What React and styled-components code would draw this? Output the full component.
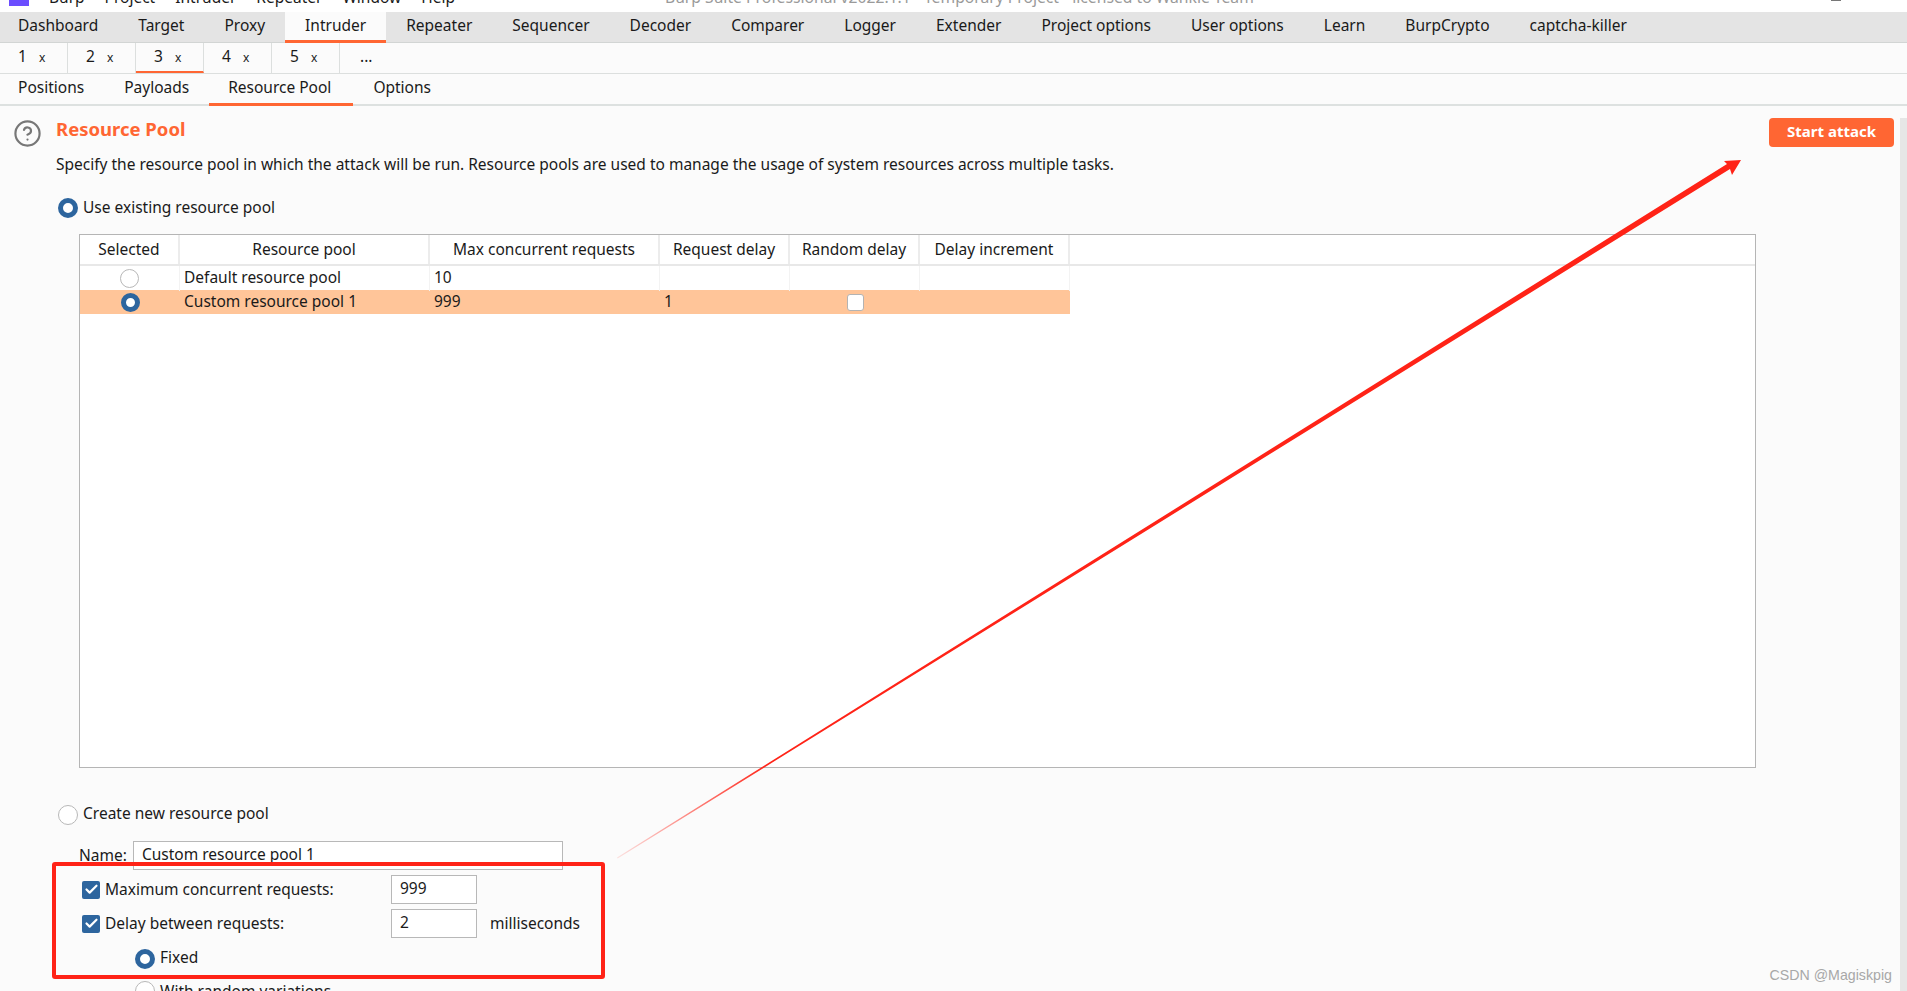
import styled, { createGlobalStyle } from "styled-components";
import { Check, CircleHelp } from "lucide-react";

const GlobalStyle = createGlobalStyle`
  html, body {
    margin: 0;
    padding: 0;
    background: #fbfbfb;
    overflow: hidden;
  }
  * {
    box-sizing: border-box;
  }
`;

const orange = "#ff6633";
const blue = "#2d659e";

const Page = styled.div`
  position: relative;
  width: 1907px;
  height: 991px;
  overflow: hidden;
  background: #fbfbfb;
  color: #1a1a1a;
  font-family: "Noto Sans", "Liberation Sans", sans-serif;
  font-size: 15.5px;
  display: flex;
  flex-direction: column;
`;

const MenuBar = styled.div`
  position: relative;
  flex: none;
  height: 12px;
  background: #fff;
  overflow: hidden;
`;

const MenuInner = styled.div`
  position: absolute;
  left: 9px;
  right: 0;
  bottom: 5px;
  height: 20px;
  line-height: 20px;
  display: flex;
  align-items: center;
  white-space: nowrap;
`;

const Logo = styled.div`
  position: absolute;
  left: 9px;
  top: -14px;
  width: 20px;
  height: 20px;
  background: #6b4dff;
`;

const MenuItem = styled.span`
  margin-left: ${(p) => p.$left}px;
`;

const WindowTitle = styled.span`
  margin-left: 210px;
  color: #9a9a9a;
  font-size: 15.7px;
`;

const WindowButton = styled.div`
  position: absolute;
  top: 0;
  left: ${(p) => p.$left}px;
  width: 10px;
  height: 1px;
  background: #777;
`;

const MainTabs = styled.div`
  flex: none;
  height: 31px;
  background: #e4e4e4;
  border-bottom: 1px solid #d2d5d4;
  display: flex;
`;

const MainTab = styled.div`
  height: 31px;
  padding: 0 20px;
  line-height: 27px;
  background: ${(p) => (p.$active ? "#fbfbfb" : "transparent")};
  border-bottom: ${(p) => (p.$active ? `3px solid ${orange}` : "none")};
  white-space: nowrap;
  &:first-child {
    padding-left: 18px;
  }
`;

const NumberTabs = styled.div`
  flex: none;
  height: 31px;
  border-bottom: 1px solid #dcdfde;
  display: flex;
`;

const NumberTab = styled.div`
  width: ${(p) => p.$width || 68}px;
  height: 30px;
  border-right: ${(p) => (p.$last ? "none" : "1px solid #dcdfde")};
  border-bottom: ${(p) => (p.$active ? `2px solid ${orange}` : "none")};
  display: flex;
  align-items: center;
  padding-left: ${(p) => (p.$last ? 20 : 18)}px;
  gap: 12px;
  line-height: 26px;
  padding-bottom: ${(p) => (p.$active ? 2 : 4)}px;
`;

const CloseMark = styled.span`
  font-size: 12px;
  padding-top: 3px;
`;

const SubTabs = styled.div`
  flex: none;
  height: 32px;
  border-bottom: 2px solid #dde1e0;
  display: flex;
`;

const SubTab = styled.div`
  height: 32px;
  padding: ${(p) => (p.$active ? "0 22px 0 19px" : "0 20px")};
  line-height: 27px;
  border-bottom: ${(p) => (p.$active ? `3px solid ${orange}` : "none")};
  white-space: nowrap;
  &:first-child {
    padding-left: 18px;
  }
`;

const Main = styled.div`
  flex: 1;
  min-height: 0;
  display: flex;
  padding-top: 12px;
`;

const HelpColumn = styled.div`
  flex: none;
  width: 56px;
  padding: 1px 0 0 13px;
  color: #777;
`;

const Content = styled.div`
  flex: 1;
  min-width: 0;
`;

const Title = styled.h2`
  margin: 0;
  height: 22px;
  line-height: 22px;
  font-size: 18.5px;
  font-weight: 700;
  color: ${orange};
`;

const Description = styled.p`
  margin: 13px 0 0;
  height: 22px;
  line-height: 22px;
`;

const OptionRow = styled.div`
  display: flex;
  align-items: center;
  gap: 5px;
  height: 24px;
  margin-top: ${(p) => p.$top || 0}px;
  margin-left: ${(p) => p.$left || 0}px;
`;

const Radio = styled.span`
  flex: none;
  display: inline-block;
  width: ${(p) => p.$size || 20}px;
  height: ${(p) => p.$size || 20}px;
  margin-top: ${(p) => p.$drop || 0}px;
  border-radius: 50%;
  background: #fff;
  border: ${(p) => (p.$on ? `5.5px solid ${blue}` : "1.5px solid #b8b8b8")};
`;

const Table = styled.div`
  width: 1677px;
  height: 534px;
  margin: 15px 0 0 23px;
  background: #fff;
  border: 1px solid #b5b5b5;
`;

const columns = "100px 250px 230px 130px 130px 150px";

const HeaderRow = styled.div`
  display: grid;
  grid-template-columns: ${columns} 1fr;
  height: 31px;
  border-bottom: 2px solid #e8e8e8;
`;

const HeaderCell = styled.div`
  text-align: center;
  line-height: 29px;
  border-right: 2px solid #ececec;
  white-space: nowrap;
`;

const BodyRow = styled.div`
  display: grid;
  grid-template-columns: ${columns};
  height: 24px;
  width: 990px;
  background: ${(p) => (p.$selected ? "#ffc599" : "transparent")};
`;

const BodyCell = styled.div`
  display: flex;
  align-items: center;
  justify-content: ${(p) => (p.$center ? "center" : "flex-start")};
  padding: 0 0 ${(p) => (p.$center ? 0 : 3)}px ${(p) => (p.$center ? 0 : 4)}px;
  border-right: ${(p) => (p.$selected ? "none" : "1px solid #f3f3f3")};
  white-space: nowrap;
`;

const TableCheck = styled.span`
  width: 17px;
  height: 17px;
  background: #fff;
  border: 1.5px solid #b3b3b3;
  border-radius: 3px;
`;

const NameRow = styled.div`
  display: flex;
  align-items: center;
  gap: 6px;
  margin: 16px 0 0 23px;
  height: 28px;
`;

const TextField = styled.div`
  width: ${(p) => p.$width}px;
  height: 29px;
  flex: none;
  background: #fff;
  border: 1.5px solid #b8b8b8;
  padding-left: ${(p) => p.$pad}px;
  line-height: 25px;
`;

const FieldRow = styled.div`
  display: flex;
  align-items: center;
  margin: ${(p) => p.$top}px 0 0 26px;
  height: 29px;
`;

const CheckBox = styled.span`
  flex: none;
  width: 18px;
  height: 18px;
  background: ${blue};
  border-radius: 2px;
  color: #fff;
  display: flex;
  align-items: center;
  justify-content: center;
`;

const FieldLabel = styled.span`
  flex: none;
  width: 291px;
  padding: 0 0 2px 5px;
`;

const Unit = styled.span`
  margin-left: 13px;
  padding-bottom: 2px;
`;

const StartButton = styled.button`
  flex: none;
  width: 125px;
  height: 29px;
  margin-right: 6px;
  border: none;
  border-radius: 4px;
  background: ${orange};
  color: #fff;
  font-family: inherit;
  font-size: 15px;
  font-weight: 700;
  padding: 0 0 4px;
`;

const Scrollbar = styled.div`
  flex: none;
  width: 7px;
  background: #e6e6e6;
`;

/* annotations pasted on top of the screenshot */
const RedBox = styled.div`
  position: absolute;
  left: 52px;
  top: 862px;
  width: 553px;
  height: 117px;
  border: 4px solid #ff2317;
  border-radius: 3px;
`;

const ArrowLayer = styled.svg`
  position: absolute;
  left: 0;
  top: 0;
  pointer-events: none;
`;

const Watermark = styled.div`
  position: absolute;
  right: 15px;
  top: 966px;
  font-family: "Liberation Sans", Arial, sans-serif;
  font-size: 14.2px;
  line-height: 18px;
  color: #a8a8a8;
`;

const tabs = [
  "Dashboard", "Target", "Proxy", "Intruder", "Repeater", "Sequencer", "Decoder", "Comparer",
  "Logger", "Extender", "Project options", "User options", "Learn", "BurpCrypto", "captcha-killer",
];

const App = () => {
  return (
    <Page>
      <GlobalStyle />
      <MenuBar>
        <Logo />
        <MenuInner>
          <MenuItem $left={40}>Burp</MenuItem>
          <MenuItem $left={20}>Project</MenuItem>
          <MenuItem $left={20}>Intruder</MenuItem>
          <MenuItem $left={20}>Repeater</MenuItem>
          <MenuItem $left={20}>Window</MenuItem>
          <MenuItem $left={20}>Help</MenuItem>
          <WindowTitle>Burp Suite Professional v2022.1.1 - Temporary Project - licensed to Wankle Team</WindowTitle>
        </MenuInner>
        <WindowButton $left={1831} />
      </MenuBar>

      <MainTabs>
        {tabs.map((t) => (
          <MainTab key={t} $active={t === "Intruder"}>
            {t}
          </MainTab>
        ))}
      </MainTabs>

      <NumberTabs>
        {[1, 2, 3, 4, 5].map((n) => (
          <NumberTab key={n} $active={n === 3}>
            {n}
            <CloseMark>x</CloseMark>
          </NumberTab>
        ))}
        <NumberTab $width={53} $last>...</NumberTab>
      </NumberTabs>

      <SubTabs>
        <SubTab>Positions</SubTab>
        <SubTab>Payloads</SubTab>
        <SubTab $active>Resource Pool</SubTab>
        <SubTab>Options</SubTab>
      </SubTabs>

      <Main>
        <HelpColumn>
          <CircleHelp size={29} strokeWidth={1.8} />
        </HelpColumn>
        <Content>
          <Title>Resource Pool</Title>
          <Description>
            Specify the resource pool in which the attack will be run. Resource pools are used to manage the usage of system resources across multiple tasks.
          </Description>
          <OptionRow $top={20} $left={2}>
            <Radio $on $drop={1} />
            Use existing resource pool
          </OptionRow>
          <Table>
            <HeaderRow>
              <HeaderCell>Selected</HeaderCell>
              <HeaderCell>Resource pool</HeaderCell>
              <HeaderCell>Max concurrent requests</HeaderCell>
              <HeaderCell>Request delay</HeaderCell>
              <HeaderCell>Random delay</HeaderCell>
              <HeaderCell>Delay increment</HeaderCell>
            </HeaderRow>
            <BodyRow>
              <BodyCell $center><Radio $size={19} /></BodyCell>
              <BodyCell>Default resource pool</BodyCell>
              <BodyCell>10</BodyCell>
              <BodyCell />
              <BodyCell />
              <BodyCell />
            </BodyRow>
            <BodyRow $selected>
              <BodyCell $center $selected><Radio $size={19} $on /></BodyCell>
              <BodyCell $selected>Custom resource pool 1</BodyCell>
              <BodyCell $selected>999</BodyCell>
              <BodyCell $selected>1</BodyCell>
              <BodyCell $center $selected><TableCheck /></BodyCell>
              <BodyCell $selected />
            </BodyRow>
          </Table>
          <OptionRow $top={33} $left={2}>
            <Radio $drop={3} />
            Create new resource pool
          </OptionRow>
          <NameRow>
            Name:
            <TextField $width={430} $pad={8}>Custom resource pool 1</TextField>
          </NameRow>
          <FieldRow $top={6}>
            <CheckBox><Check size={15} strokeWidth={3.5} /></CheckBox>
            <FieldLabel>Maximum concurrent requests:</FieldLabel>
            <TextField $width={86} $pad={8}>999</TextField>
          </FieldRow>
          <FieldRow $top={5}>
            <CheckBox><Check size={15} strokeWidth={3.5} /></CheckBox>
            <FieldLabel>Delay between requests:</FieldLabel>
            <TextField $width={86} $pad={8}>2</TextField>
            <Unit>milliseconds</Unit>
          </FieldRow>
          <OptionRow $top={7} $left={79}>
            <Radio $on $drop={3} />
            Fixed
          </OptionRow>
          <OptionRow $top={10} $left={79}>
            <Radio />
            With random variations
          </OptionRow>
        </Content>
        <StartButton>Start attack</StartButton>
        <Scrollbar />
      </Main>

      <RedBox />
      <ArrowLayer width="1907" height="991" viewBox="0 0 1907 991">
        <defs>
          <linearGradient id="tail" gradientUnits="userSpaceOnUse" x1="617" y1="858" x2="770" y2="764">
            <stop offset="0" stopColor="#ff2317" stopOpacity="0.12" />
            <stop offset="1" stopColor="#ff2317" />
          </linearGradient>
        </defs>
        <polygon points="617,857.6 1727,164 1724,161 1741,160 1732,175 1730,169 617.6,858.4" fill="url(#tail)" />
      </ArrowLayer>
      <Watermark>CSDN @Magiskpig</Watermark>
    </Page>
  );
};

export default App;
